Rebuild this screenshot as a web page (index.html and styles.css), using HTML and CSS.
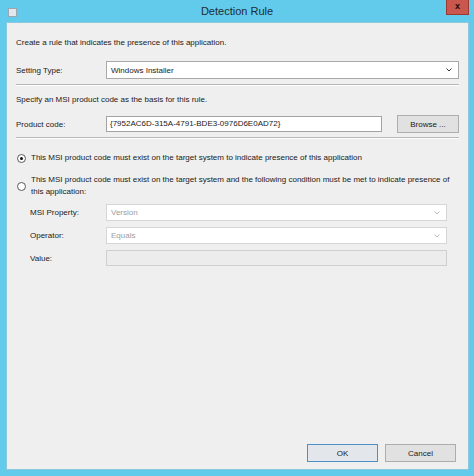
FILE: index.html
```html
<!DOCTYPE html>
<html lang="en">
<head>
  <meta charset="UTF-8">
  <title>Detection Rule</title>
  <link rel="stylesheet" href="styles.css">
</head>
<body>
  <div class="window">
    <div class="titlebar">
      <span class="app-icon"></span>
      <span class="title">Detection Rule</span>
      <span class="close">x</span>
    </div>
    <div class="client">
      <p class="intro">Create a rule that indicates the presence of this application.</p>

      <div class="row setting">
        <label>Setting Type:</label>
        <div class="combo">
          <span>Windows Installer</span>
          <svg class="chev" width="6" height="4" viewBox="0 0 6 4"><polyline points="0.5,0.5 3,3 5.5,0.5" fill="none" stroke="#333" stroke-width="1"/></svg>
        </div>
      </div>

      <hr class="sep">
      <p class="hint">Specify an MSI product code as the basis for this rule.</p>

      <div class="row product">
        <label>Product code:</label>
        <div class="textbox">{7952AC6D-315A-4791-BDE3-0976D6E0AD72}</div>
        <button class="btn browse">Browse ...</button>
      </div>

      <hr class="sep">

      <div class="radio-row first">
        <span class="radio checked"></span>
        <span>This MSI product code must exist on the target system to indicate presence of this application</span>
      </div>
      <div class="radio-row second">
        <span class="radio"></span>
        <span>This MSI product code must exist on the target system and the following condition must be met to indicate presence of<br>this application:</span>
      </div>

      <div class="row sub">
        <label>MSI Property:</label>
        <div class="combo disabled">
          <span>Version</span>
          <svg class="chev" width="6" height="4" viewBox="0 0 6 4"><polyline points="0.5,0.5 3,3 5.5,0.5" fill="none" stroke="#b8b8b8" stroke-width="1"/></svg>
        </div>
      </div>
      <div class="row sub">
        <label>Operator:</label>
        <div class="combo disabled">
          <span>Equals</span>
          <svg class="chev" width="6" height="4" viewBox="0 0 6 4"><polyline points="0.5,0.5 3,3 5.5,0.5" fill="none" stroke="#b8b8b8" stroke-width="1"/></svg>
        </div>
      </div>
      <div class="row sub">
        <label>Value:</label>
        <div class="textbox disabled"></div>
      </div>

      <div class="footer">
        <button class="btn default">OK</button>
        <button class="btn">Cancel</button>
      </div>
    </div>
  </div>
</body>
</html>
```

FILE: styles.css
```css
* { box-sizing: border-box; }

body {
  margin: 0;
  font-family: "Liberation Sans", Arial, sans-serif;
  font-size: 8px;
  color: #1a1a1a;
}

.window {
  width: 474px;
  height: 476px;
  background: #62cbeb;
  display: flex;
  flex-direction: column;
  padding: 0 5px 6px 6px;
}

/* title bar */
.titlebar {
  height: 22px;
  display: flex;
  align-items: center;
  position: relative;
  margin: 0 -5px 0 -6px;
}
.app-icon {
  width: 9px;
  height: 9px;
  margin: 2px 0 0 8px;
  background: #e4e8ec;
  border: 1px solid #9aa6b0;
}
.title {
  flex: 1;
  text-align: center;
  font-size: 11px;
  color: #1f2a33;
  margin-right: 17px;
}
.close {
  position: absolute;
  top: 0;
  right: 5px;
  width: 23px;
  height: 15px;
  background: #c9574d;
  border: 1px solid #9a3a33;
  border-top: none;
  color: #1a0a08;
  font-size: 9px;
  font-weight: bold;
  text-align: center;
  line-height: 13px;
}

/* dialog body */
.client {
  flex: 1;
  background: #efefef;
  border: 1px solid #8cc7dc;
  padding: 0 9px 0 9px;
  display: flex;
  flex-direction: column;
}

p { margin: 0; }
.intro { margin-top: 15px; line-height: 10px; }

.row {
  display: flex;
  align-items: center;
}
.row label {
  width: 90px;
  flex: none;
}
.setting { margin-top: 13px; }
.row.sub { padding-left: 14px; margin-right: 12px; }
.row.sub label { width: 76px; }
.row.sub + .row.sub { margin-top: 6px; }

.combo {
  flex: 1;
  height: 18px;
  background: #fff;
  border: 1px solid #a9a9a9;
  display: flex;
  align-items: center;
  justify-content: space-between;
  padding: 0 6px 0 4px;
}
.combo.disabled {
  height: 17px;
  border-color: #d6d6d6;
  color: #9c9c9c;
}

.textbox {
  height: 16px;
  width: 276px;
  background: #fff;
  border: 1px solid #a3a3a3;
  padding: 0 3px;
  line-height: 14px;
}
.textbox.disabled {
  flex: 1;
  background: #ececec;
  border-color: #cfcfcf;
}

.sep {
  margin: 5px 0 0 0;
  border: none;
  border-top: 1px solid #b8b8b8;
  border-bottom: 1px solid #fdfdfd;
  height: 0;
}
.product + .sep { margin-top: 4px; }

.hint { margin-top: 9px; line-height: 10px; }
.product { margin-top: 10px; }

.btn {
  font-family: inherit;
  font-size: 8px;
  color: #1a1a1a;
  background: #e1e1e1;
  border: 1px solid #adadad;
  height: 18px;
  width: 71px;
  padding: 0;
}
.browse { width: 62px; margin-left: auto; }
.btn.default { border-color: #4f8fc4; background: #e3e6ea; }

/* radio options */
.radio-row {
  display: flex;
  align-items: center;
  line-height: 12px;
}
.radio {
  width: 9px;
  height: 9px;
  border-radius: 50%;
  border: 1px solid #5a5a5a;
  background: #fff;
  margin: 0 5px 0 1px;
  flex: none;
  position: relative;
}
.radio.checked::after {
  content: "";
  position: absolute;
  left: 2px;
  top: 2px;
  width: 3px;
  height: 3px;
  border-radius: 50%;
  background: #111;
}
.radio-row.first { margin-top: 13px; }
.radio-row.second { margin-top: 10px; margin-bottom: 6px; }

.footer {
  margin-top: auto;
  margin-bottom: 7px;
  display: flex;
  justify-content: flex-end;
  gap: 7px;
  padding-right: 3px;
}
```
